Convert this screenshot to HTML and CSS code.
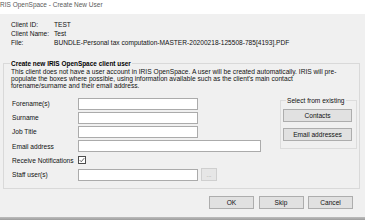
FILE: index.html
```html
<!DOCTYPE html>
<html>
<head>
<meta charset="utf-8">
<link rel="stylesheet" href="styles.css">
</head>
<body>
<div class="window">
  <div class="titlebar">RIS OpenSpace - Create New User</div>
  <div class="info">
    <span>Client ID:</span><span>TEST</span>
    <span>Client Name:</span><span>Test</span>
    <span>File:</span><span>BUNDLE-Personal tax computation-MASTER-20200218-125508-785[4193].PDF</span>
  </div>
  <fieldset class="group">
    <legend class="group-title">Create new IRIS OpenSpace client user</legend>
    <p class="desc">This client does not have a user account in IRIS OpenSpace. A user will be created automatically. IRIS will pre-<br>populate the boxes where possible, using information available such as the client's main contact<br>forename/surname and their email address.</p>
    <div class="group-body">
      <div class="form">
        <span class="label">Forename(s)</span><span class="input short"></span>
        <span class="label">Surname</span><span class="input short"></span>
        <span class="label">Job Title</span><span class="input short"></span>
        <span class="label">Email address</span><span class="input long"></span>
        <span class="label">Receive Notifications</span>
        <span class="checkbox"><svg viewBox="0 0 8 8" width="6" height="6"><path d="M1 4.2 L3 6.3 L7 1.5" fill="none" stroke="#333" stroke-width="1"/></svg></span>
        <span class="label">Staff user(s)</span>
        <span class="staff"><span class="input short"></span><span class="dots">...</span></span>
      </div>
      <fieldset class="existing">
        <legend class="existing-title">Select from existing</legend>
        <button class="btn side first">Contacts</button>
        <button class="btn side second">Email addresses</button>
      </fieldset>
    </div>
  </fieldset>
  <div class="footer">
    <button class="btn action">OK</button>
    <button class="btn action">Skip</button>
    <button class="btn action">Cancel</button>
  </div>
  <div class="bottom-bar"></div>
</div>
</body>
</html>
```
FILE: styles.css
```css
html, body {
  margin: 0;
  padding: 0;
}
body {
  width: 365px;
  height: 220px;
  overflow: hidden;
  background: #f0f0f0;
  font-family: "Liberation Sans", Arial, sans-serif;
  font-size: 6.6px;
  color: #111;
}
.window {
  height: 220px;
  display: flex;
  flex-direction: column;
}
.titlebar {
  height: 14px;
  background: #fff;
  color: #5a5a5a;
  font-size: 6.5px;
  line-height: 10px;
  white-space: nowrap;
  flex: none;
}
.info {
  display: grid;
  grid-template-columns: 43px auto;
  margin: 5.5px 0 0 11px;
  line-height: 9px;
  white-space: nowrap;
}
.group {
  box-sizing: border-box;
  width: 357px;
  margin: 13px 0 0 3px;
  padding: 0 2px 6.3px 7px;
  border: 1px solid #d9d9d9;
  min-inline-size: 0;
}
.group-title {
  font-weight: bold;
  font-size: 6.45px;
  line-height: 8px;
  padding: 0 1px;
  margin-left: -1px;
  color: #000;
}
.desc {
  margin: 0;
  font-size: 6.65px;
  line-height: 7px;
  white-space: nowrap;
}
.group-body {
  display: flex;
  margin-top: 8px;
}
.form {
  flex: 0 0 269px;
  display: grid;
  grid-template-columns: 67px 1fr;
  grid-auto-rows: 14.2px;
  align-items: center;
}
.label {
  padding-left: 1px;
  white-space: nowrap;
}
.input {
  display: block;
  box-sizing: border-box;
  height: 12px;
  background: #fff;
  border: 1px solid #ababab;
}
.short { width: 120px; }
.long { width: 183px; }
.checkbox {
  box-sizing: border-box;
  width: 8px;
  height: 8px;
  border: 1px solid #4d4d4d;
  background: #fff;
  display: flex;
  align-items: center;
  justify-content: center;
}
.checkbox svg { display: block; }
.staff {
  display: flex;
  align-items: center;
  gap: 3px;
}
.dots {
  box-sizing: border-box;
  width: 16px;
  height: 13px;
  background: #e6e6e6;
  border: 1px solid #cfcfcf;
  color: #9a9a9a;
  font-size: 6px;
  line-height: 12px;
  text-align: center;
}
.existing {
  box-sizing: border-box;
  width: 78px;
  height: 52.5px;
  margin: 0;
  padding: 0 5px 0 2px;
  border: 1px solid #dcdcdc;
  min-inline-size: 0;
}
.existing-title {
  line-height: 8px;
  padding: 0 1px;
  margin-left: 3px;
  white-space: nowrap;
}
.btn {
  box-sizing: border-box;
  font-family: "Liberation Sans", Arial, sans-serif;
  font-size: 6.6px;
  color: #111;
  background: #e1e1e1;
  border: 1px solid #adadad;
  padding: 0;
  margin: 0;
}
.side {
  display: block;
  width: 69px;
  height: 12.5px;
}
.first { margin-top: 4.5px; }
.second { margin-top: 6.5px; }
.footer {
  display: flex;
  justify-content: flex-end;
  gap: 4.5px;
  margin-top: 7px;
  padding-right: 12px;
}
.action {
  width: 45px;
  height: 13px;
}
.bottom-bar {
  margin-top: auto;
  height: 3px;
  background: linear-gradient(#bdbdbd, #9c9c9c);
}
```
